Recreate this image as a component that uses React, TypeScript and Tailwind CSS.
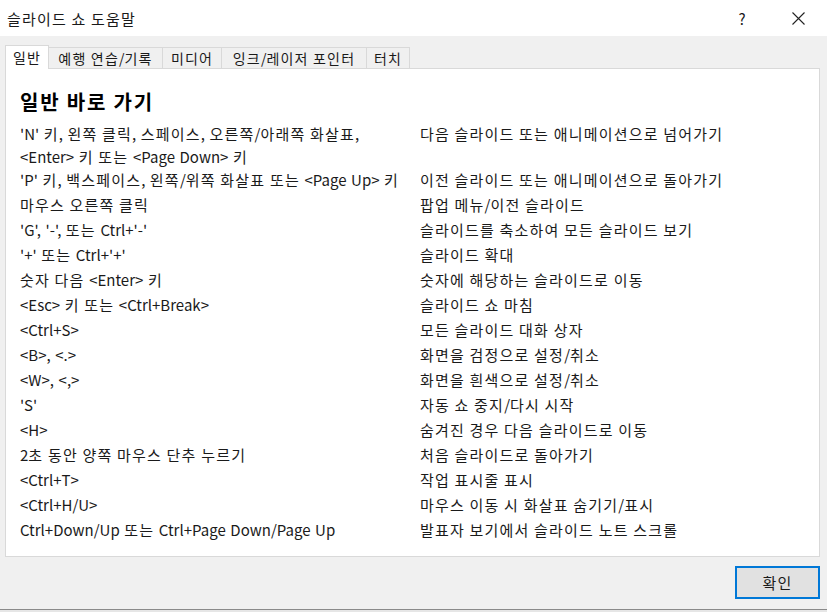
import React from 'react';

// Malgun Gothic sets Hangul wider than Noto CJK; widen Hangul runs only
const Ko = ({ t, wide = 'tracking-[1.2px]' }: { t: string; wide?: string }) => (
  <>
    {t.split(/([\uAC00-\uD7A3 ]+)/).map((part, i) =>
      /[\uAC00-\uD7A3 ]/.test(part) ? (
        <span key={i} className={wide}>{part}</span>
      ) : (
        <React.Fragment key={i}>{part}</React.Fragment>
      )
    )}
  </>
);

const Lines = ({ t }: { t: string }) => (
  <>
    {t.split('\n').map((line, i) => (
      <div key={i}>
        <Ko t={line} />
      </div>
    ))}
  </>
);

const rows: [string, string][] = [
  ["'N' 키, 왼쪽 클릭, 스페이스, 오른쪽/아래쪽 화살표,\n<Enter> 키 또는 <Page Down> 키", "다음 슬라이드 또는 애니메이션으로 넘어가기"],
  ["'P' 키, 백스페이스, 왼쪽/위쪽 화살표 또는 <Page Up> 키", "이전 슬라이드 또는 애니메이션으로 돌아가기"],
  ["마우스 오른쪽 클릭", "팝업 메뉴/이전 슬라이드"],
  ["'G', '-', 또는 Ctrl+'-'", "슬라이드를 축소하여 모든 슬라이드 보기"],
  ["'+' 또는 Ctrl+'+'", "슬라이드 확대"],
  ["숫자 다음 <Enter> 키", "숫자에 해당하는 슬라이드로 이동"],
  ["<Esc> 키 또는 <Ctrl+Break>", "슬라이드 쇼 마침"],
  ["<Ctrl+S>", "모든 슬라이드 대화 상자"],
  ["<B>, <.>", "화면을 검정으로 설정/취소"],
  ["<W>, <,>", "화면을 흰색으로 설정/취소"],
  ["'S'", "자동 쇼 중지/다시 시작"],
  ["<H>", "숨겨진 경우 다음 슬라이드로 이동"],
  ["2초 동안 양쪽 마우스 단추 누르기", "처음 슬라이드로 돌아가기"],
  ["<Ctrl+T>", "작업 표시줄 표시"],
  ["<Ctrl+H/U>", "마우스 이동 시 화살표 숨기기/표시"],
  ["Ctrl+Down/Up 또는 Ctrl+Page Down/Page Up", "발표자 보기에서 슬라이드 노트 스크롤"],
];

const tabs = [
  { label: "일반", w: "w-[44px]" },
  { label: "예행 연습/기록", w: "w-[114px]" },
  { label: "미디어", w: "w-[59px]" },
  { label: "잉크/레이저 포인터", w: "w-[145px]" },
  { label: "터치", w: "w-[43px]" },
];

export default function App() {
  return (
    <div className="w-[827px] h-[612px] bg-[#f0f0f0] flex flex-col text-[#1a1a1a] font-['Noto_Sans_CJK_KR','Noto_Sans',sans-serif] overflow-hidden">
      {/* Title bar */}
      <div className="h-[36px] bg-white flex items-center pl-[7px] shrink-0">
        <span className="text-[15px] leading-none"><Ko t="슬라이드 쇼 도움말" /></span>
        <div className="ml-auto flex items-center">
          <span className="text-[15px] leading-none w-[46px] text-center mr-[10px]">?</span>
          <div className="w-[46px] h-[36px] flex items-center justify-center mr-[6px]">
            <svg width="13" height="13" viewBox="0 0 13 13">
              <path d="M0.5 0.5 L12.5 12.5 M12.5 0.5 L0.5 12.5" stroke="#222" strokeWidth="1.1" />
            </svg>
          </div>
        </div>
      </div>

      {/* Tabs + panel */}
      <div className="pl-[5px] pr-[7px] pt-[9px] flex flex-col">
        <div className="flex items-end h-[23px]">
          {tabs.map((t, i) => (
            <div
              key={t.label}
              className={
                i === 0
                  ? `${t.w} h-[24px] -mb-px bg-white border border-b-0 border-[#d9d9d9] flex items-center justify-center text-[14px] whitespace-nowrap relative z-10`
                  : `${t.w} h-[21px] bg-[#f0f0f0] border border-l-0 border-b-0 border-[#d9d9d9] flex items-center justify-center text-[14px] whitespace-nowrap`
              }
            >
              <Ko t={t.label} />
            </div>
          ))}
        </div>
        <div className="h-[489px] bg-white border border-[#d9d9d9] pl-[14px] pt-[21px]">
          <h1 className="text-[20px] font-bold leading-[23px] mb-[9px] text-black">
            <Ko t="일반 바로 가기" wide="tracking-[1.8px]" />
          </h1>
          <div className="flex flex-col text-[15px] leading-[23px]">
            {rows.map(([k, v], i) => (
              <div key={i} className={`grid grid-cols-[400px_1fr] whitespace-nowrap ${i < 2 ? '' : 'pt-[2px]'}`}>
                <div><Lines t={k} /></div>
                <div><Lines t={v} /></div>
              </div>
            ))}
          </div>
        </div>
      </div>

      {/* Footer */}
      <div className="flex-1 flex justify-end items-start pr-[7px] pt-[9px]">
        <button className="w-[85px] h-[33px] bg-[#e1e1e1] border-2 border-[#0078d7] text-[15px] leading-none">
          <Ko t="확인" />
        </button>
      </div>
      <div className="h-[1px] bg-[#8a8a8a] shrink-0" />
      <div className="h-[2px] bg-[#e6e6e6] shrink-0" />
    </div>
  );
}
